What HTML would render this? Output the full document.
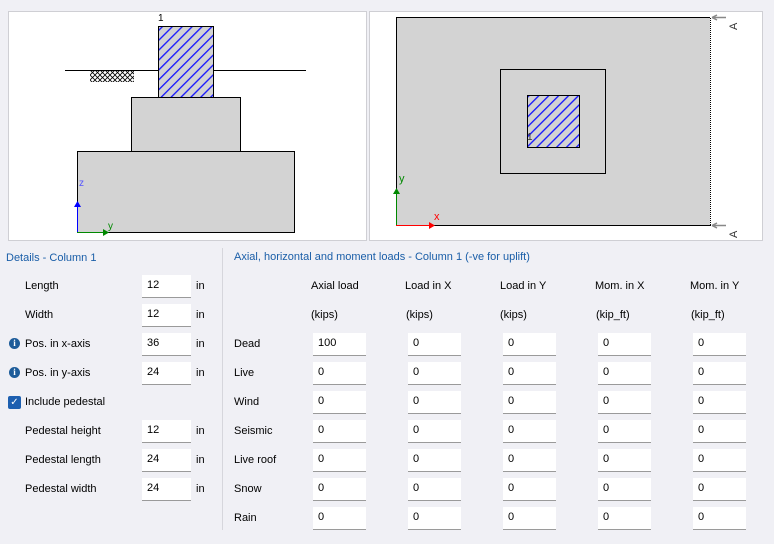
<!DOCTYPE html>
<html><head><meta charset="utf-8"><style>
body{margin:0;width:774px;height:544px;background:#f0f0f5;font-family:"Liberation Sans",sans-serif;font-size:11px;color:#000;position:relative;overflow:hidden}
.a{position:absolute;white-space:nowrap}
.l{position:absolute;line-height:14px}
.i{position:absolute;background:#fff;border-bottom:1px solid #9a9a9a;height:23px;box-sizing:border-box;padding:4px 0 0 5px;line-height:12px}
.s{width:49px}.w{width:53px}
.h{color:#1a5ea8}
.info{position:absolute;left:9px;width:11px;height:11px;border-radius:50%;background:#1d5c9a;color:#fff;font-size:9px;font-weight:bold;text-align:center;line-height:11px;font-family:"Liberation Serif",serif}
</style></head><body>
<svg class="a" style="left:0;top:0" width="774" height="244">
<defs>
<pattern id="hat" width="7" height="7" patternUnits="userSpaceOnUse" patternTransform="rotate(45)"><rect width="7" height="7" fill="#d3d3d3"/><line x1="0.7" y1="0" x2="0.7" y2="7" stroke="#1010ff" stroke-width="1.3"/></pattern>
<pattern id="cr" width="5" height="5" patternUnits="userSpaceOnUse"><path d="M0 0L5 5M5 0L0 5" stroke="#000" stroke-width="0.8"/></pattern>
</defs>
<rect x="8.5" y="11.5" width="358" height="229" fill="#fff" stroke="#cfcfd4"/>
<rect x="369.5" y="11.5" width="393" height="229" fill="#fff" stroke="#cfcfd4"/>
<line x1="65" y1="70.5" x2="306" y2="70.5" stroke="#000"/>
<rect x="90" y="71" width="44" height="11" fill="url(#cr)"/>
<rect x="158.5" y="26.5" width="55" height="71" fill="url(#hat)" stroke="#000"/>
<rect x="131.5" y="97.5" width="109" height="54" fill="#d3d3d3" stroke="#000"/>
<rect x="77.5" y="151.5" width="217" height="81" fill="#d3d3d3" stroke="#000"/>
<text x="158" y="21" font-size="10" font-family="Liberation Sans">1</text>
<line x1="77.5" y1="232" x2="77.5" y2="206" stroke="#00f"/><path d="M74 207L77.5 201L81 207Z" fill="#00f"/>
<text x="79" y="186" font-size="10" fill="#55f">z</text>
<line x1="77" y1="232.5" x2="104" y2="232.5" stroke="#080"/><path d="M103 229L109 232.5L103 236Z" fill="#080"/>
<text x="108" y="229" font-size="10" fill="#080">y</text>
<rect x="396.5" y="17.5" width="314" height="208" fill="#d3d3d3" stroke="#000"/>
<line x1="710.5" y1="17" x2="710.5" y2="225" stroke="#fff" stroke-dasharray="1 1"/>
<rect x="500.5" y="69.5" width="105" height="104" fill="none" stroke="#000"/>
<rect x="527.5" y="95.5" width="52" height="52" fill="url(#hat)" stroke="#000"/>
<text x="527" y="140" font-size="10" fill="#333">1</text>
<line x1="396.5" y1="225" x2="396.5" y2="193" stroke="#080"/><path d="M393 194L396.5 188L400 194Z" fill="#080"/>
<text x="399" y="182" font-size="11" fill="#080">y</text>
<line x1="396" y1="225.5" x2="430" y2="225.5" stroke="#f00"/><path d="M429 222L435 225.5L429 229Z" fill="#f00"/>
<text x="434" y="220" font-size="11" fill="#f00">x</text>
<path d="M712 17.5H726M712 17.5L717 15M712 17.5L717 20M712 225.5H726M712 225.5L717 223M712 225.5L717 228" stroke="#888" stroke-width="1.5" fill="none"/>
<text x="728" y="29" font-size="11" fill="#333" transform="rotate(-90 733 25)">A</text>
<text x="728" y="237" font-size="11" fill="#333" transform="rotate(-90 733 233)">A</text>
<line x1="96" y1="252.5" x2="213" y2="252.5" stroke="#d0d0d8"/>
<line x1="530" y1="257.5" x2="765" y2="257.5" stroke="#d0d0d8"/>
</svg>
<div class="a" style="left:222px;top:248px;width:1px;height:282px;background:#d6d6dc"></div>
<div class="l h" style="left:6px;top:251px">Details - Column 1</div>
<div class="l h" style="left:234px;top:250px">Axial, horizontal and moment loads - Column 1 (-ve for uplift)</div>

<div class="l" style="left:25px;top:279px">Length</div><div class="i s" style="left:142px;top:275px">12</div><div class="l" style="left:196px;top:279px">in</div>
<div class="l" style="left:25px;top:308px">Width</div><div class="i s" style="left:142px;top:304px">12</div><div class="l" style="left:196px;top:308px">in</div>
<div class="info" style="top:338px">i</div><div class="l" style="left:25px;top:337px">Pos. in x-axis</div><div class="i s" style="left:142px;top:333px">36</div><div class="l" style="left:196px;top:337px">in</div>
<div class="info" style="top:367px">i</div><div class="l" style="left:25px;top:366px">Pos. in y-axis</div><div class="i s" style="left:142px;top:362px">24</div><div class="l" style="left:196px;top:366px">in</div>
<div class="a" style="left:8px;top:396px;width:13px;height:13px;border-radius:2px;background:#1d5fb0;color:#fff;font-size:10px;text-align:center;line-height:13px">✓</div><div class="l" style="left:25px;top:395px">Include pedestal</div>
<div class="l" style="left:25px;top:424px">Pedestal height</div><div class="i s" style="left:142px;top:420px">12</div><div class="l" style="left:196px;top:424px">in</div>
<div class="l" style="left:25px;top:453px">Pedestal length</div><div class="i s" style="left:142px;top:449px">24</div><div class="l" style="left:196px;top:453px">in</div>
<div class="l" style="left:25px;top:482px">Pedestal width</div><div class="i s" style="left:142px;top:478px">24</div><div class="l" style="left:196px;top:482px">in</div>

<div class="l" style="left:311px;top:279px">Axial load</div><div class="l" style="left:405px;top:279px">Load in X</div><div class="l" style="left:500px;top:279px">Load in Y</div><div class="l" style="left:595px;top:279px">Mom. in X</div><div class="l" style="left:690px;top:279px">Mom. in Y</div>
<div class="l" style="left:311px;top:308px">(kips)</div><div class="l" style="left:406px;top:308px">(kips)</div><div class="l" style="left:500px;top:308px">(kips)</div><div class="l" style="left:596px;top:308px">(kip_ft)</div><div class="l" style="left:691px;top:308px">(kip_ft)</div>

<div class="l" style="left:234px;top:337px">Dead</div>
<div class="l" style="left:234px;top:366px">Live</div>
<div class="l" style="left:234px;top:395px">Wind</div>
<div class="l" style="left:234px;top:424px">Seismic</div>
<div class="l" style="left:234px;top:453px">Live roof</div>
<div class="l" style="left:234px;top:482px">Snow</div>
<div class="l" style="left:234px;top:511px">Rain</div>

<div class="i w" style="left:313px;top:333px">100</div><div class="i w" style="left:408px;top:333px">0</div><div class="i w" style="left:503px;top:333px">0</div><div class="i w" style="left:598px;top:333px">0</div><div class="i w" style="left:693px;top:333px">0</div>
<div class="i w" style="left:313px;top:362px">0</div><div class="i w" style="left:408px;top:362px">0</div><div class="i w" style="left:503px;top:362px">0</div><div class="i w" style="left:598px;top:362px">0</div><div class="i w" style="left:693px;top:362px">0</div>
<div class="i w" style="left:313px;top:391px">0</div><div class="i w" style="left:408px;top:391px">0</div><div class="i w" style="left:503px;top:391px">0</div><div class="i w" style="left:598px;top:391px">0</div><div class="i w" style="left:693px;top:391px">0</div>
<div class="i w" style="left:313px;top:420px">0</div><div class="i w" style="left:408px;top:420px">0</div><div class="i w" style="left:503px;top:420px">0</div><div class="i w" style="left:598px;top:420px">0</div><div class="i w" style="left:693px;top:420px">0</div>
<div class="i w" style="left:313px;top:449px">0</div><div class="i w" style="left:408px;top:449px">0</div><div class="i w" style="left:503px;top:449px">0</div><div class="i w" style="left:598px;top:449px">0</div><div class="i w" style="left:693px;top:449px">0</div>
<div class="i w" style="left:313px;top:478px">0</div><div class="i w" style="left:408px;top:478px">0</div><div class="i w" style="left:503px;top:478px">0</div><div class="i w" style="left:598px;top:478px">0</div><div class="i w" style="left:693px;top:478px">0</div>
<div class="i w" style="left:313px;top:507px">0</div><div class="i w" style="left:408px;top:507px">0</div><div class="i w" style="left:503px;top:507px">0</div><div class="i w" style="left:598px;top:507px">0</div><div class="i w" style="left:693px;top:507px">0</div>
</body></html>
